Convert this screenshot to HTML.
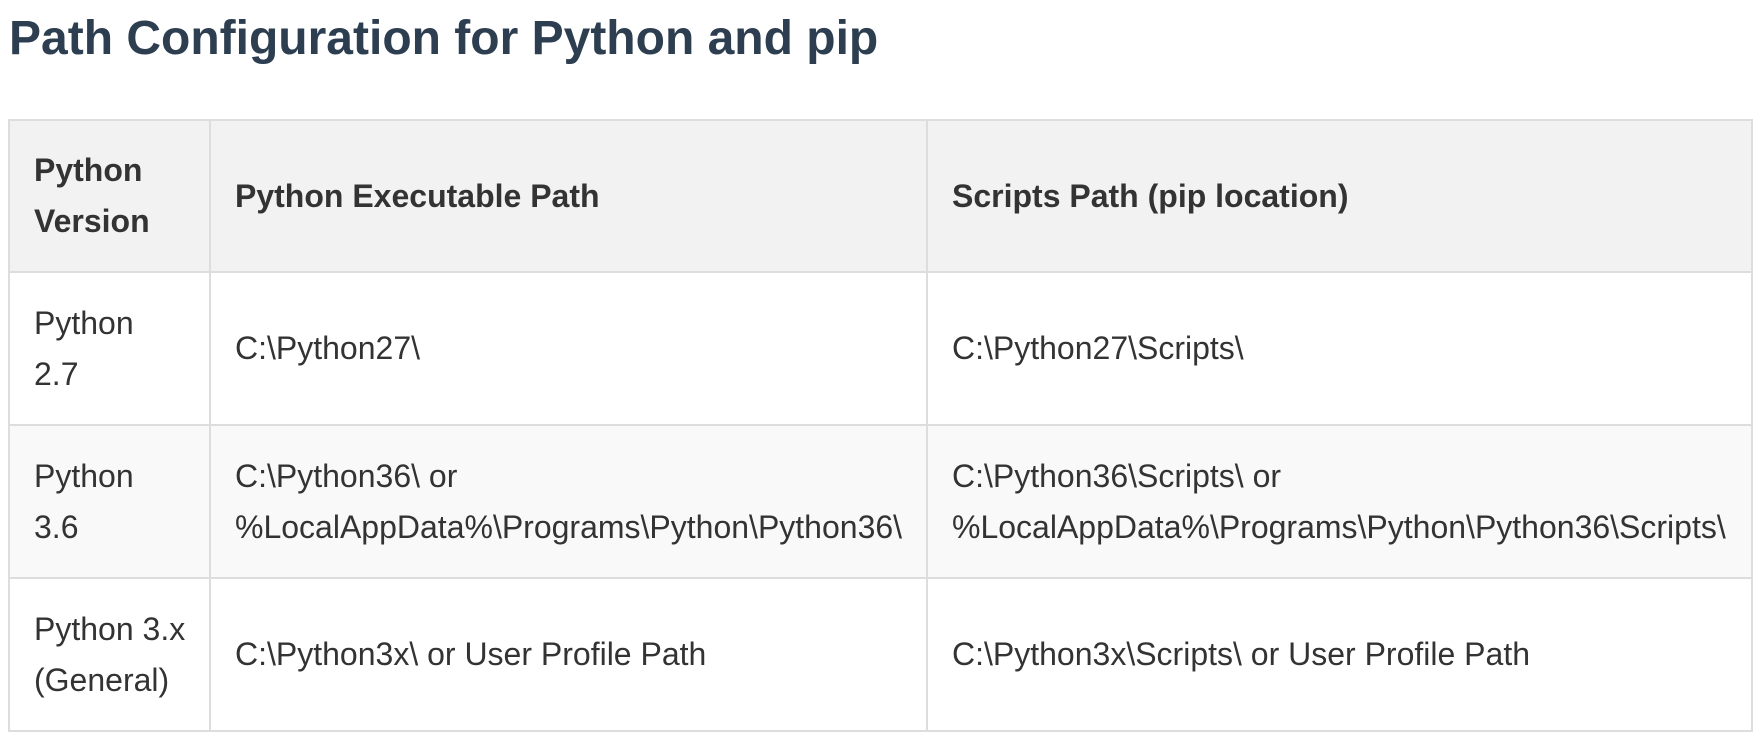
<!DOCTYPE html>
<html><head><style>
body{margin:0;background:#fff;font-family:"Liberation Sans",Arial,sans-serif;color:#333;}
h1{position:absolute;left:9px;top:4px;margin:0;font-size:48px;line-height:70px;color:#2c3e50;font-weight:bold;}
table{position:absolute;left:8px;top:119px;border-collapse:collapse;width:1743px;table-layout:fixed;}
td,th{border:2px solid #ddd;padding:0 24px;font-size:32px;line-height:51px;text-align:left;vertical-align:middle;white-space:nowrap;}
th{background:#f2f2f2;font-weight:bold;height:150px;font-size:32px;}
td{height:151px;}
tr.alt td{background:#f9f9f9;}
</style></head><body>
<h1>Path Configuration for Python and pip</h1>
<table>
<colgroup><col style="width:201px"><col style="width:717px"><col style="width:825px"></colgroup>
<tr><th>Python<br>Version</th><th>Python Executable Path</th><th>Scripts Path (pip location)</th></tr>
<tr><td>Python<br>2.7</td><td>C:\Python27\</td><td>C:\Python27\Scripts\</td></tr>
<tr class="alt"><td>Python<br>3.6</td><td>C:\Python36\ or<br>%LocalAppData%\Programs\Python\Python36\</td><td>C:\Python36\Scripts\ or<br>%LocalAppData%\Programs\Python\Python36\Scripts\</td></tr>
<tr><td>Python 3.x<br>(General)</td><td>C:\Python3x\ or User Profile Path</td><td>C:\Python3x\Scripts\ or User Profile Path</td></tr>
</table>
</body></html>
